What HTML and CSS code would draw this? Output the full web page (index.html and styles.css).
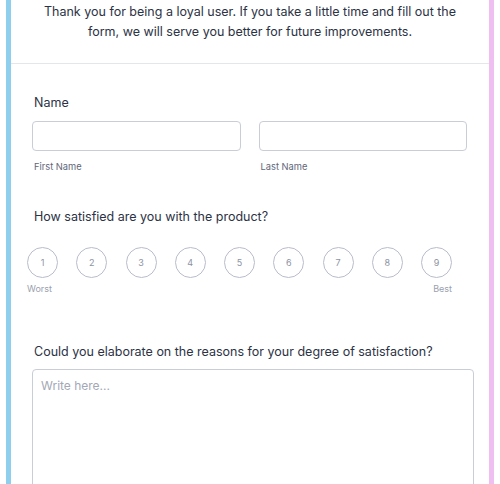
FILE: index.html
```html
<!DOCTYPE html>
<html lang="en">
<head>
<meta charset="utf-8">
<title>Feedback form</title>
<link rel="stylesheet" href="styles.css">
</head>
<body>
<div class="card">
  <div class="intro">
    <p>Thank you for being a loyal user. If you take a little time and fill out the form, we will serve you better for future improvements.</p>
  </div>
  <div class="field name-field">
    <label class="label">Name</label>
    <div class="name-row">
      <div class="name-col">
        <input class="input" type="text">
        <span class="sublabel">First Name</span>
      </div>
      <div class="name-col">
        <input class="input" type="text">
        <span class="sublabel">Last Name</span>
      </div>
    </div>
  </div>
  <div class="field rating-field">
    <label class="label">How satisfied are you with the product?</label>
    <div class="rating">
      <div class="circles">
        <span class="circle">1</span>
        <span class="circle">2</span>
        <span class="circle">3</span>
        <span class="circle">4</span>
        <span class="circle">5</span>
        <span class="circle">6</span>
        <span class="circle">7</span>
        <span class="circle">8</span>
        <span class="circle">9</span>
      </div>
      <div class="ends">
        <span>Worst</span>
        <span>Best</span>
      </div>
    </div>
  </div>
  <div class="field text-field">
    <label class="label">Could you elaborate on the reasons for your degree of satisfaction?</label>
    <textarea class="textarea" placeholder="Write here..."></textarea>
  </div>
</div>
</body>
</html>
```

FILE: styles.css
```css
html, body {
  margin: 0;
  padding: 0;
  background: #ffffff;
  height: 484px;
  overflow: hidden;
}

body {
  font-family: Inter, "Liberation Sans", sans-serif;
  color: #2c3345;
}

.card {
  margin: 0 6px;
  border-left: 5px solid #8dcfed;
  border-right: 5px solid #efbff2;
  min-height: 484px;
  box-sizing: border-box;
}

.intro {
  padding: 2px 24px 21px;
  border-bottom: 1px solid #e5e6ea;
  text-align: center;
}

.intro p {
  margin: 0;
  font-size: 12.5px;
  line-height: 20px;
  color: #2c3345;
}

.field {
  padding: 0 22px 0 21px;
  display: flex;
  flex-direction: column;
}

.label {
  font-size: 12.5px;
  line-height: 22px;
  padding-left: 2px;
  color: #2c3345;
}

.name-field {
  margin-top: 28px;
}

.name-row {
  display: flex;
  gap: 18px;
  margin-top: 7px;
}

.name-col {
  flex: 1;
  display: flex;
  flex-direction: column;
}

.input {
  height: 30px;
  box-sizing: border-box;
  border: 1px solid #c8cdd8;
  border-radius: 4px;
  background: #fff;
  margin: 0;
}

.sublabel {
  margin-top: 8px;
  font-size: 9.3px;
  line-height: 15px;
  padding-left: 2px;
  color: #5f667a;
}

.rating-field {
  margin-top: 32px;
}

.rating {
  margin-top: 19px;
  margin-left: -5px;
  width: 425px;
}

.circles {
  display: flex;
  justify-content: space-between;
}

.circle {
  width: 31px;
  height: 31px;
  box-sizing: border-box;
  border: 1px solid #b9bdcb;
  border-radius: 50%;
  display: flex;
  align-items: center;
  justify-content: center;
  font-size: 9px;
  color: #8d92a3;
}

.ends {
  display: flex;
  justify-content: space-between;
  margin-top: 3px;
  font-size: 9px;
  line-height: 15px;
  color: #9a9fae;
}

.text-field {
  margin-top: 45px;
  padding-right: 15px;
}

.textarea {
  margin-top: 6px;
  height: 140px;
  box-sizing: border-box;
  border: 1px solid #c8cdd8;
  border-radius: 4px;
  padding: 7px 8px;
  font-family: Inter, "Liberation Sans", sans-serif;
  font-size: 12px;
  line-height: 18px;
  resize: none;
  color: #2c3345;
}

.textarea::placeholder {
  color: #a3a8b6;
}
```
